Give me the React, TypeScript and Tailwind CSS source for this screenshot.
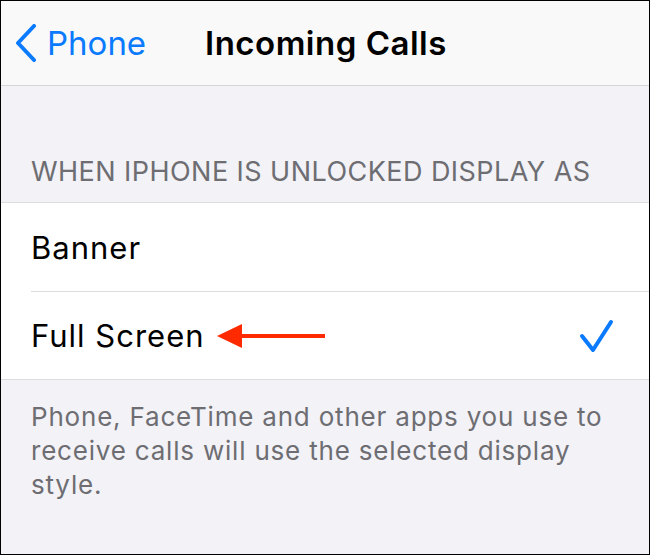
const font = { fontFamily: 'Inter, "Noto Sans", sans-serif' }

function BackChevron() {
    return (
        <svg width="22" height="38" viewBox="0 0 22 38" fill="none" className="shrink-0">
            <path d="M19 2 L3 19 L19 36" stroke="#0a7aff" strokeWidth="4" strokeLinecap="round" strokeLinejoin="round" />
        </svg>
    )
}

function RedArrow() {
    return (
        <svg width="110" height="28" viewBox="0 0 110 28" className="ml-[12px]">
            <polygon points="0,14 25,2 25,26" fill="#ff2a00" />
            <rect x="22" y="12" width="86" height="4" fill="#ff2a00" />
        </svg>
    )
}

function Checkmark() {
    return (
        <svg width="36" height="36" viewBox="0 0 36 36" fill="none" className="ml-auto">
            <path d="M4 18 L15 32 L33 4" stroke="#0a7aff" strokeWidth="4" strokeLinecap="round" strokeLinejoin="round" />
        </svg>
    )
}

const options = [
    { label: 'Banner', selected: false },
    { label: 'Full Screen', selected: true },
]

export default function App() {
    return (
        <div className="w-[650px] h-[555px] border border-black bg-[#f2f2f7] flex flex-col overflow-hidden" style={font}>
            {/* navigation bar */}
            <div className="h-[85px] shrink-0 bg-[#f9f9f9] border-b border-[#d6d6d8] flex items-center">
                <div className="flex items-center pl-[14px] w-[204px]">
                    <BackChevron />
                    <span className="ml-[10px] text-[33px] text-[#0a7aff] leading-none">Phone</span>
                </div>
                <h1 className="text-[33px] font-semibold text-black leading-none tracking-[0.5px]">Incoming Calls</h1>
            </div>

            {/* section header */}
            <div className="h-[116px] shrink-0 flex items-end px-[30px] pb-[17px]">
                <span className="text-[27px] text-[#6d6d72] leading-none uppercase tracking-[0.45px]">When iPhone is unlocked display as</span>
            </div>

            {/* options */}
            <div className="bg-white border-y border-[#dcdce0]">
                {options.map((opt, i) => (
                    <div key={opt.label} className="pl-[30px]">
                        <div className={`h-[88px] flex items-center pr-[35px] ${i > 0 ? 'border-t border-[#dcdce0]' : ''}`}>
                            <span className="text-[31px] text-black leading-none tracking-[1px]">{opt.label}</span>
                            {opt.selected && <RedArrow />}
                            {opt.selected && <Checkmark />}
                        </div>
                    </div>
                ))}
            </div>

            {/* footer */}
            <p className="px-[30px] pt-[20px] text-[26px] leading-[34px] text-[#6d6d72] tracking-[0.8px]">
                Phone, FaceTime and other apps you use to receive calls will use the selected display style.
            </p>
        </div>
    )
}
